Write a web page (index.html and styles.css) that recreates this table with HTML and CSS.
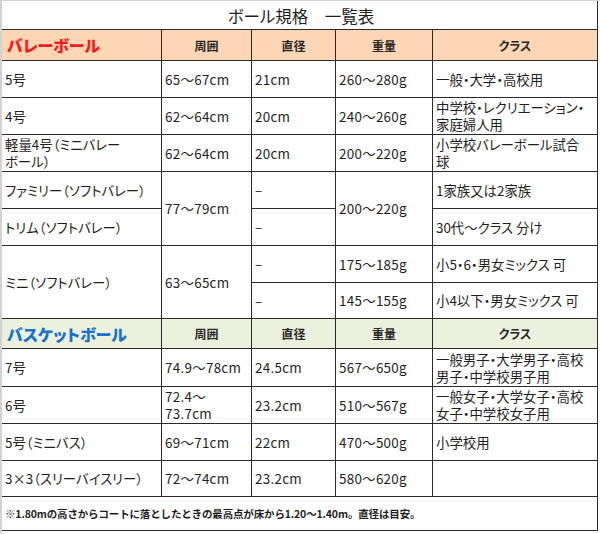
FILE: index.html
```html
<!DOCTYPE html>
<html lang="ja">
<head>
<meta charset="utf-8">
<title>ボール規格 一覧表</title>
<link rel="stylesheet" href="styles.css">
</head>
<body>
<div class="frame">
  <div class="sheet">
    <div class="c title">ボール規格　一覧表</div>

    <div class="c hd vb sport">バレーボール</div>
    <div class="c hd vb">周囲</div>
    <div class="c hd vb">直径</div>
    <div class="c hd vb">重量</div>
    <div class="c hd vb">クラス</div>

    <div class="c">5号</div>
    <div class="c num">65〜67cm</div>
    <div class="c num">21cm</div>
    <div class="c num">260〜280g</div>
    <div class="c">一般・大学・高校用</div>

    <div class="c">4号</div>
    <div class="c num">62〜64cm</div>
    <div class="c num">20cm</div>
    <div class="c num">240〜260g</div>
    <div class="c">中学校・レクリエーション・<br>家庭婦人用</div>

    <div class="c">軽量4号（ミニバレー<br>ボール）</div>
    <div class="c num">62〜64cm</div>
    <div class="c num">20cm</div>
    <div class="c num">200〜220g</div>
    <div class="c">小学校バレーボール試合<br>球</div>

    <div class="c">ファミリー（ソフトバレー）</div>
    <div class="c num span2">77〜79cm</div>
    <div class="c dash">–</div>
    <div class="c num span2">200〜220g</div>
    <div class="c">1家族又は2家族</div>

    <div class="c">トリム（ソフトバレー）</div>
    <div class="c dash">–</div>
    <div class="c">30代〜クラス 分け</div>

    <div class="c span2">ミニ（ソフトバレー）</div>
    <div class="c num span2">63〜65cm</div>
    <div class="c dash">–</div>
    <div class="c num">175〜185g</div>
    <div class="c">小5・6・男女ミックス 可</div>

    <div class="c dash">–</div>
    <div class="c num">145〜155g</div>
    <div class="c">小4以下・男女ミックス 可</div>

    <div class="c hd bb sport">バスケットボール</div>
    <div class="c hd bb">周囲</div>
    <div class="c hd bb">直径</div>
    <div class="c hd bb">重量</div>
    <div class="c hd bb">クラス</div>

    <div class="c">7号</div>
    <div class="c num">74.9〜78cm</div>
    <div class="c num">24.5cm</div>
    <div class="c num">567〜650g</div>
    <div class="c">一般男子・大学男子・高校<br>男子・中学校男子用</div>

    <div class="c">6号</div>
    <div class="c num">72.4〜<br>73.7cm</div>
    <div class="c num">23.2cm</div>
    <div class="c num">510〜567g</div>
    <div class="c">一般女子・大学女子・高校<br>女子・中学校女子用</div>

    <div class="c">5号（ミニバス）</div>
    <div class="c num">69〜71cm</div>
    <div class="c num">22cm</div>
    <div class="c num">470〜500g</div>
    <div class="c">小学校用</div>

    <div class="c">3×3（スリーバイスリー）</div>
    <div class="c num">72〜74cm</div>
    <div class="c num">23.2cm</div>
    <div class="c num">580〜620g</div>
    <div class="c"></div>

    <div class="c note">※1.80mの高さからコートに落としたときの最高点が床から1.20〜1.40m。直径は目安。</div>
  </div>
</div>
</body>
</html>
```

FILE: styles.css
```css
html, body {
  margin: 0;
  padding: 0;
  background: #ffffff;
}

.frame {
  box-sizing: border-box;
  width: 600px;
  height: 534px;
  background: #ffffff;
  border-top: 1px solid #d2d2d2;
  border-left: 2px solid #d2d2d2;
  font-family: "Noto Sans CJK JP", "Noto Sans", sans-serif;
  color: #1e1e1e;
}

.sheet {
  display: grid;
  width: max-content;
  grid-template-columns: 159px 89px 83px 96px 164px;
  grid-template-rows: 28px 30px 36px 36px 36px 36px 36px 36px 35px 29px 37px 36px 36px 35px 33px;
  gap: 1px;
  background: #2a2a2a;
  border-right: 1px solid #2a2a2a;
  border-bottom: 1px solid #2a2a2a;
}

.c {
  display: flex;
  align-items: center;
  background: #ffffff;
  padding: 0 3px;
  font-size: 13.4px;
  line-height: 17px;
  font-feature-settings: "palt";
  white-space: nowrap;
  overflow: hidden;
}

.span2 {
  grid-row: span 2;
}

.title {
  grid-column: 1 / -1;
  justify-content: center;
  font-size: 16.5px;
  line-height: 22px;
  padding-top: 1px;
  padding-left: 6px;
}

.hd {
  justify-content: center;
  font-weight: 700;
  font-size: 12px;
  color: #262626;
}

.vb {
  background: #fcd6b5;
}

.bb {
  background: #ecf1de;
}

.sport {
  justify-content: flex-start;
  font-size: 16px;
  line-height: 20px;
  padding-left: 5px;
  font-weight: 900;
}

.vb.sport {
  color: #f71c1c;
}

.bb.sport {
  color: #1b72c6;
}

.num {
  letter-spacing: 0.3px;
}

.dash {
  align-items: flex-start;
  padding-top: 9px;
}

.note {
  grid-column: 1 / -1;
  font-size: 10.5px;
  line-height: 14px;
  font-weight: 700;
  font-feature-settings: normal;
  letter-spacing: -0.15px;
}
```
